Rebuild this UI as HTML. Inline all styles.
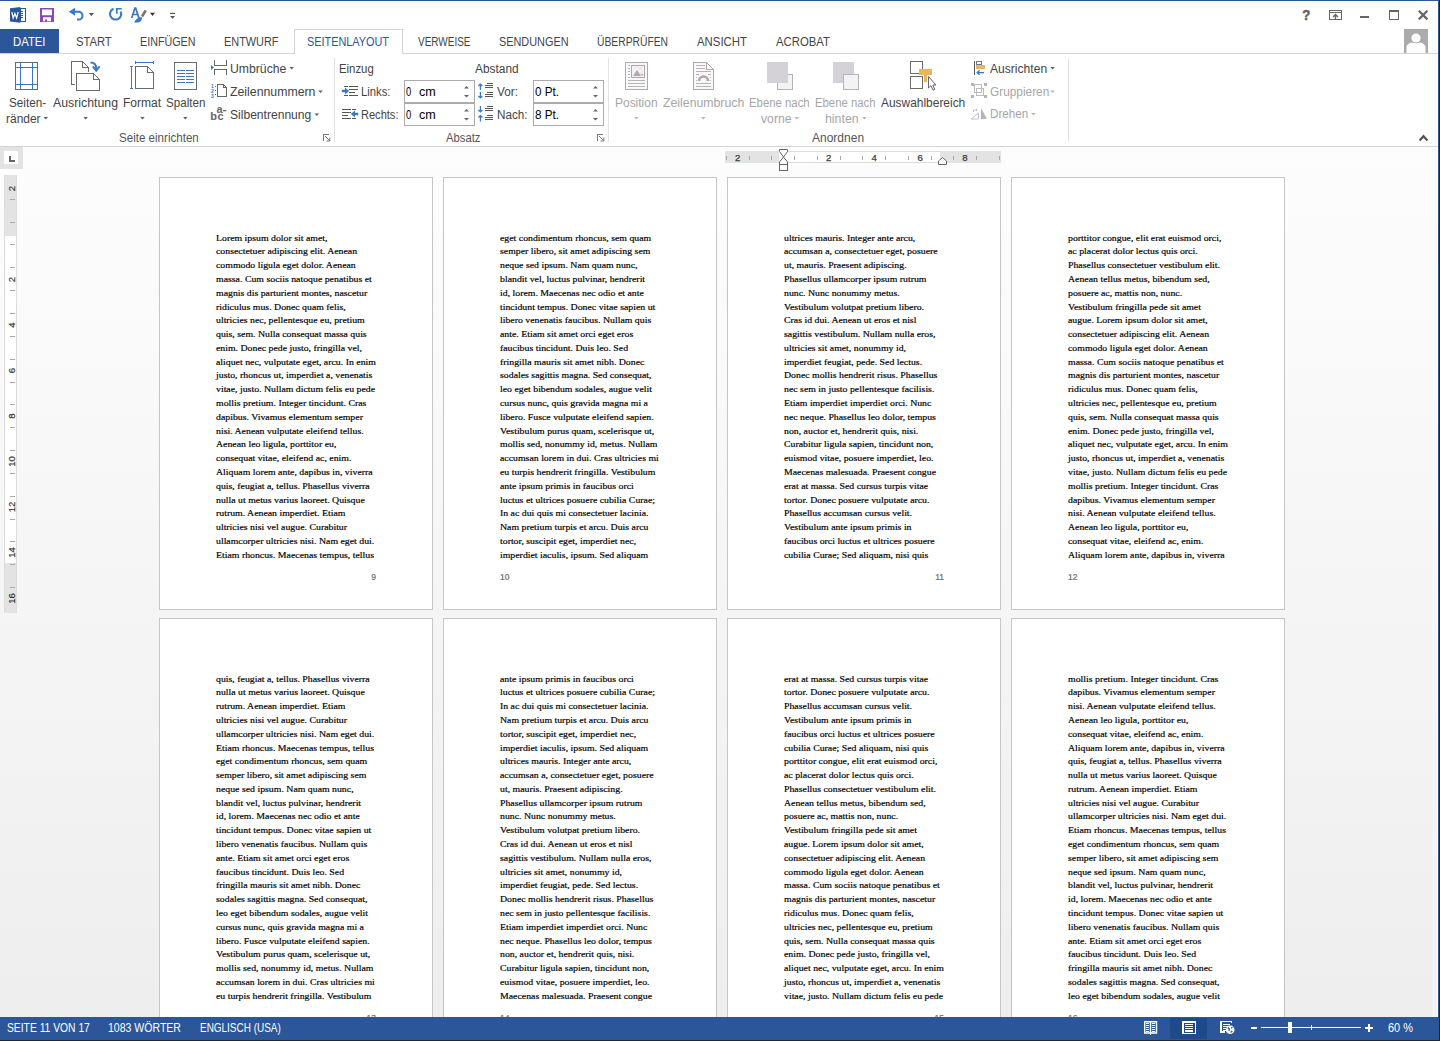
<!DOCTYPE html>
<html><head><meta charset="utf-8"><style>
html,body{margin:0;padding:0}
body{width:1440px;height:1041px;overflow:hidden;position:relative;background:#fff;font-family:"Liberation Sans",sans-serif}
.t{position:absolute;white-space:pre;transform-origin:0 0}
.a{position:absolute}
.pg{position:absolute;width:272px;height:431px;border:1px solid #c6c6c6;background:#fff}
.tx{position:absolute;white-space:pre;font-family:"Liberation Serif",serif;transform-origin:0 0}
.pn{position:absolute;font-size:8.5px;line-height:8.5px;color:#6e6e6e;-webkit-text-stroke:0.2px #6e6e6e;white-space:pre}
</style></head><body>
<!-- window border -->
<div class="a" style="left:0;top:0;width:1440px;height:1px;background:#2b579a"></div>
<div class="a" style="left:1438px;top:0;width:1px;height:1041px;background:#2b579a"></div>
<div class="a" style="left:1439px;top:0;width:1px;height:1041px;background:#202020"></div>
<!-- doc area background -->
<div class="a" style="left:0;top:147px;width:1438px;height:870px;background:linear-gradient(#fdfdfd,#eeeeee)"></div>
<!-- tab row -->
<div class="a" style="left:0;top:29px;width:59px;height:24px;background:#2b579a"></div>
<div class="a" style="left:0;top:53px;width:294px;height:1px;background:#d4d4d4"></div>
<div class="a" style="left:403px;top:53px;width:1035px;height:1px;background:#d4d4d4"></div>
<div class="a" style="left:294px;top:29px;width:107px;height:24px;border:1px solid #d4d4d4;border-bottom:none"></div>
<!-- ribbon bottom -->
<div class="a" style="left:0;top:146px;width:1438px;height:1px;background:#d4d4d4"></div>
<!-- group separators -->
<div class="a" style="left:334px;top:58px;width:1px;height:84px;background:#e1e1e1"></div>
<div class="a" style="left:608px;top:58px;width:1px;height:84px;background:#e1e1e1"></div>
<div class="a" style="left:1068px;top:58px;width:1px;height:84px;background:#e1e1e1"></div>
<!-- status bar -->
<div class="a" style="left:0;top:1017px;width:1438px;height:23px;background:#2b579a"></div>
<div class="a" style="left:0;top:1040px;width:1440px;height:1px;background:#262626"></div>
<div class="a" style="left:1170px;top:1018px;width:37px;height:21px;background:#1f4a8a"></div>
<div class="a" style="left:1432px;top:147px;width:5px;height:870px;background:linear-gradient(#fefefe,#f2f2f4)"></div>
<div class="a" style="left:1437px;top:147px;width:1px;height:870px;background:#fcfcfc"></div>
<svg class="a" style="left:0;top:0" width="1440" height="147" viewBox="0 0 1440 147">
<!-- Word logo -->
<path d="M10 8.2 L20.3 7 L20.3 22.8 L10 21.6 Z" fill="#2b579a"/>
<rect x="20.5" y="8.5" width="5" height="13" fill="#fff" stroke="#2b579a" stroke-width="1"/>
<path d="M20.5 11.5h2.5M20.5 13.5h2.5M20.5 15.5h2.5M20.5 17.5h2.5" stroke="#2b579a" stroke-width="1"/>
<path d="M11.8 12 L13.2 18 L14.9 13.5 L16.6 18 L18.2 12" fill="none" stroke="#fff" stroke-width="1.2"/>
<!-- Save -->
<path d="M40 8 H54 V22 H40 Z M42 9.6 V15.3 H52 V9.6 Z M43 17.2 V21.2 H45.2 V19.2 H47 V21.2 H51 V17.2 Z" fill="#8b48b8" fill-rule="evenodd"/>
<!-- Undo -->
<path d="M68.8 11.8 L75 7.8 L75 15.8 Z" fill="#3a78c4"/>
<path d="M74 11.8 H78.6 A3.9 3.9 0 0 1 78.6 19.6 H77" fill="none" stroke="#3a78c4" stroke-width="2"/>
<path d="M88.8 13 H94 L91.4 16 Z" fill="#555"/>
<!-- Redo -->
<path d="M113.5 8.8 A5.6 5.6 0 1 0 120.6 11.5" fill="none" stroke="#3a78c4" stroke-width="2"/>
<path d="M116 8 H121.8 L121.8 9.6 L117.6 9.6 L117.6 13.8 L116 13.8 Z" fill="#3a78c4"/>
<!-- Format painter -->
<path d="M130.8 18 L134.3 7.2 L136.3 7.2 L139.9 18 L138 18 L137.1 15.3 L133.5 15.3 L132.6 18 Z M134 13.8 L136.6 13.8 L135.3 9.8 Z" fill="#3a78c4" fill-rule="evenodd"/>
<path d="M142 16.5 L145.8 10.4" stroke="#7a7470" stroke-width="2.6"/>
<path d="M134 22.6 C135.3 19.6 138.2 17.3 141.6 17 C142.6 18.8 141.2 21.8 138.5 22.4 Z" fill="#3a78c4"/>
<path d="M150 12.8 H155 L152.5 16 Z" fill="#333"/>
<!-- customize -->
<rect x="170" y="12.8" width="5" height="1.2" fill="#555"/>
<path d="M170 16 H175 L172.5 18.8 Z" fill="#555"/>
<!-- window controls -->
<text x="1302.2" y="20.2" font-family="Liberation Sans" font-weight="700" font-size="14" fill="#666" stroke="#666" stroke-width="0.5" transform="translate(1302.2 20.2) scale(0.95 1) translate(-1302.2 -20.2)">?</text>
<rect x="1329.5" y="10.5" width="12" height="9" fill="none" stroke="#666" stroke-width="1"/>
<path d="M1329.5 12.5 H1341.5" stroke="#666" stroke-width="1"/>
<path d="M1335.5 19.5 V14.8 M1333 17 L1335.5 14.5 L1338 17" fill="none" stroke="#666" stroke-width="1.4"/>
<rect x="1360" y="16" width="9" height="2" fill="#666"/>
<rect x="1389.5" y="10.5" width="9" height="9" fill="none" stroke="#666" stroke-width="1"/>
<rect x="1389" y="10" width="10" height="2" fill="#666"/>
<path d="M1418.8 10.8 L1427.4 19.4 M1427.4 10.8 L1418.8 19.4" stroke="#666" stroke-width="2.2"/>
<!-- avatar -->
<rect x="1404" y="29" width="24" height="24" fill="#ababab"/>
<circle cx="1416" cy="38" r="4.6" fill="#fff"/>
<path d="M1406.5 53 V47.5 C1406.5 44.5 1409.5 43 1412 42.6 C1413.5 43.6 1418.5 43.6 1420 42.6 C1422.5 43 1425.5 44.5 1425.5 47.5 V53 Z" fill="#fff"/>
<!-- Seitenraender -->
<g shape-rendering="crispEdges">
<rect x="15.5" y="62.5" width="22" height="27" fill="#fff" stroke="#6a6a6a"/>
<path d="M20.5 63 V89 M32.5 63 V89 M16 67.5 H37 M16 84.5 H37" stroke="#3a78c4"/>
<!-- Format -->
<path d="M135.5 66.5 H147.5 L153.5 72.5 V88.5 H135.5 Z" fill="#fff" stroke="#6a6a6a"/>
<path d="M147.5 66.5 V72.5 H153.5" fill="none" stroke="#6a6a6a"/>
<path d="M135.5 62.5 H153.5 M135.5 61 V64 M153.5 61 V64" stroke="#3a78c4"/>
<path d="M131.5 66.5 V88.5 M130 66.5 H133 M130 88.5 H133" stroke="#3a78c4"/>
<!-- Spalten -->
<rect x="174.5" y="62.5" width="22" height="27" fill="#fff" stroke="#6a6a6a"/>
<path d="M177 70.5 H185 M186 70.5 H194 M177 73.5 H185 M186 73.5 H194 M177 76.5 H185 M186 76.5 H194 M177 79.5 H185 M186 79.5 H194 M177 82.5 H185 M186 82.5 H194" stroke="#3a78c4"/>
<!-- Ausrichtung -->
<path d="M75 84.5 H71.5 V61.5 H82.5 L88.5 67.5 V71.5" fill="none" stroke="#6a6a6a"/>
<path d="M82.5 61.5 V67.5 H88.5" fill="none" stroke="#6a6a6a"/>
<path d="M76.5 73.5 H93.5 L99.5 79.5 V90.5 H76.5 Z" fill="#fff" stroke="#6a6a6a"/>
<path d="M93.5 73.5 V79.5 H99.5" fill="none" stroke="#6a6a6a"/>
</g>
<path d="M90.5 62.5 C94 62.5 96.5 64.5 96.2 69" fill="none" stroke="#3a78c4" stroke-width="2"/>
<path d="M92.8 66.4 L96.2 70.6 L99.6 66.4" fill="none" stroke="#3a78c4" stroke-width="2"/>
<!-- Umbrueche -->
<g shape-rendering="crispEdges">
<path d="M214.5 60 V65.5 H226.5 V60 M214.5 75 V69.5 H226.5 V75" fill="none" stroke="#666"/>
<!-- Zeilennummern -->
<path d="M217.5 84.5 H223.5 L226.5 87.5 V96.5 H217.5 Z" fill="#fff" stroke="#666"/>
<path d="M223.5 84.5 V87.5 H226.5" fill="none" stroke="#666"/>
<rect x="215" y="86" width="1" height="1" fill="#666"/><rect x="215" y="90" width="1" height="1" fill="#666"/><rect x="215" y="94" width="1" height="1" fill="#666"/>
</g>
<path d="M211 65 L214 67.5 L211 70 Z" fill="#3a78c4"/>
<text x="211" y="88" font-family="Liberation Sans" font-size="5" font-weight="700" fill="#3a78c4">1</text>
<text x="211" y="92.5" font-family="Liberation Sans" font-size="5" font-weight="700" fill="#3a78c4">2</text>
<text x="211" y="97.5" font-family="Liberation Sans" font-size="5" font-weight="700" fill="#3a78c4">3</text>
<!-- Silbentrennung -->
<g font-family="Liberation Sans" font-size="11" font-weight="700" fill="#666">
<text x="210.3" y="120">b</text><text x="217.4" y="120">c</text><text x="216.6" y="113">a</text>
</g>
<rect x="223" y="110" width="3.4" height="1.3" fill="#666"/>
<!-- Links -->
<g shape-rendering="crispEdges" fill="#555">
<rect x="344" y="86" width="4" height="1"/><rect x="349" y="86" width="9" height="1"/>
<rect x="349" y="89" width="9" height="1"/><rect x="349" y="92" width="6" height="1"/>
<rect x="344" y="95" width="4" height="1"/><rect x="349" y="95" width="9" height="1"/>
<rect x="342" y="109" width="9" height="1"/><rect x="352" y="109" width="4" height="1"/>
<rect x="342" y="112" width="9" height="1"/><rect x="342" y="115" width="6" height="1"/>
<rect x="342" y="118" width="9" height="1"/><rect x="352" y="118" width="4" height="1"/>
</g>
<path d="M341.8 89.8 H345 V87.6 L349.2 91 L345 94.4 V92.2 H341.8 Z" fill="#3a78c4"/>
<path d="M358.2 112.8 H355 V110.6 L350.8 114 L355 117.4 V115.2 H358.2 Z" fill="#3a78c4"/>
<!-- Vor / Nach -->
<g shape-rendering="crispEdges" fill="#555">
<rect x="487" y="83" width="6" height="1"/><rect x="485" y="85" width="8" height="1"/><rect x="485" y="87" width="8" height="1"/>
<rect x="487" y="92" width="6" height="1"/><rect x="485" y="94" width="8" height="1"/><rect x="485" y="96" width="8" height="1"/>
<rect x="487" y="106" width="6" height="1"/><rect x="485" y="108" width="8" height="1"/><rect x="485" y="110" width="8" height="1"/>
<rect x="487" y="115" width="6" height="1"/><rect x="485" y="117" width="8" height="1"/><rect x="485" y="119" width="8" height="1"/>
</g>
<g fill="none" stroke="#3a78c4" stroke-width="1.2">
<path d="M480.4 84 V90 M478.4 86 L480.4 84 L482.4 86"/>
<path d="M480.4 92 V98 M478.4 96 L480.4 98 L482.4 96"/>
<path d="M480.4 106 V112 M478.4 110 L480.4 112 L482.4 110"/>
<path d="M480.4 115.5 V121.5 M478.4 117.5 L480.4 115.5 L482.4 117.5"/>
</g>
<!-- input boxes -->
<g shape-rendering="crispEdges" fill="#fff" stroke="#ababab">
<rect x="404.5" y="80.5" width="70" height="22"/>
<rect x="404.5" y="103.5" width="70" height="22"/>
<rect x="533.5" y="80.5" width="70" height="22"/>
<rect x="533.5" y="103.5" width="70" height="22"/>
</g>
<g fill="#666">
<path d="M464 88.5 H469 L466.5 86 Z"/><path d="M464 95 H469 L466.5 97.5 Z"/>
<path d="M464 111.5 H469 L466.5 109 Z"/><path d="M464 118 H469 L466.5 120.5 Z"/>
<path d="M593 88.5 H598 L595.5 86 Z"/><path d="M593 95 H598 L595.5 97.5 Z"/>
<path d="M593 111.5 H598 L595.5 109 Z"/><path d="M593 118 H598 L595.5 120.5 Z"/>
</g>
<!-- dialog launchers -->
<g fill="none" stroke="#777" stroke-width="1" shape-rendering="crispEdges">
<path d="M323.5 141 V134.5 H329"/><path d="M597.5 141 V134.5 H603"/>
</g>
<path d="M325 136 L329.5 140.5 M329.8 137.5 V141 H326.5" fill="none" stroke="#777" stroke-width="1"/>
<path d="M599 136 L603.5 140.5 M603.8 137.5 V141 H600.5" fill="none" stroke="#777" stroke-width="1"/>
<!-- Position -->
<g shape-rendering="crispEdges">
<rect x="625.5" y="62.5" width="22" height="27" fill="#fbf7fb" stroke="#aaa"/>
<rect x="631.5" y="65.5" width="13" height="12" fill="#f6f0f6" stroke="#aaa"/>
<path d="M628 65.5 H630 M628 68.5 H630 M628 71.5 H630 M628 74.5 H630 M628 77.5 H630 M628 80.5 H645 M628 83.5 H645 M628 86.5 H645" stroke="#b4b4b4"/>
</g>
<path d="M633 76 L637 70 L641 76 Z M640 73.5 L642.5 76 L643.5 74.5 Z" fill="#aaa"/>
<circle cx="640.5" cy="68.5" r="1" fill="#ddd"/>
<!-- Zeilenumbruch -->
<g shape-rendering="crispEdges">
<path d="M693.5 62.5 H706.5 L713.5 69.5 V89.5 H693.5 Z" fill="#fbf7fb" stroke="#aaa"/>
<path d="M706.5 62.5 V69.5 H713.5" fill="none" stroke="#aaa"/>
<path d="M696 65.5 H705 M696 68.5 H705 M696 71.5 H711 M696 74.5 H699 M708 74.5 H711 M696 83.5 H711 M696 86.5 H711" stroke="#b4b4b4"/>
<path d="M696 77.5 H697 M696 80.5 H697 M710 77.5 H711 M710 80.5 H711" stroke="#bbb"/>
</g>
<path d="M699 81 A4.5 4.5 0 0 1 708 81" fill="none" stroke="#aaa" stroke-width="2.6"/>
<!-- Ebene nach vorne -->
<g shape-rendering="crispEdges">
<rect x="777.5" y="74.5" width="15" height="15" fill="#f6f1f6" stroke="#b4b4b4"/>
<rect x="767" y="62" width="21" height="21" fill="#d4d2d7"/>
<!-- Ebene nach hinten -->
<rect x="833" y="62" width="21" height="21" fill="#d4d2d7"/>
<rect x="843.5" y="74.5" width="15" height="15" fill="#f6f1f6" stroke="#b4b4b4"/>
<!-- Auswahlbereich -->
<path d="M919 73.5 H910.5 V61.5 H922.5 V69" fill="none" stroke="#6a6a6a"/>
<rect x="910.5" y="76.5" width="12" height="12" fill="none" stroke="#6a6a6a"/>
<rect x="919" y="69" width="13" height="6" fill="#eab55c"/>
<rect x="924" y="75" width="3" height="7" fill="#eab55c"/>
</g>
<path d="M928.5 76.5 V88 L931 85.7 L933 90.2 L934.8 89.4 L932.8 85 L936 85 Z" fill="#fff" stroke="#666" stroke-width="1"/>
<!-- Ausrichten -->
<g shape-rendering="crispEdges">
<path d="M974.5 61 V75" stroke="#555"/>
<rect x="976.5" y="61.5" width="5" height="2.5" fill="none" stroke="#777"/>
<rect x="976" y="65" width="9" height="4" fill="#eab55c"/>
</g>
<path d="M984 72.6 H977.5 M979.6 70.4 L977.2 72.6 L979.6 74.8" fill="none" stroke="#3a78c4" stroke-width="1.3"/>
<!-- Gruppieren -->
<g shape-rendering="crispEdges">
<rect x="971" y="83" width="3" height="3" fill="#b4b4b4"/><rect x="984" y="83" width="3" height="3" fill="#b4b4b4"/>
<rect x="971" y="95" width="3" height="3" fill="#b4b4b4"/><rect x="984" y="95" width="3" height="3" fill="#b4b4b4"/>
<path d="M974.5 84.5 H981.5 V92.5 H974.5 Z" fill="none" stroke="#bcbcbc"/>
<path d="M976.5 88.5 H983.5 V95.5 H976.5 Z" fill="none" stroke="#bcbcbc"/>
</g>
<!-- Drehen -->
<path d="M971 119 L978.5 113 L978.5 119 Z" fill="none" stroke="#c4c4c4" stroke-width="1"/>
<path d="M981 108 L987 119 L981 119 Z" fill="#b4b4b4"/>
<path d="M973.5 112 V110 H977 M976 109 L977.2 110 L976 111" fill="none" stroke="#b4b4b4" stroke-width="0.8"/>
<!-- dropdown arrows -->
<g fill="#606060">
<path d="M43.5 117 H48 L45.75 119.5 Z"/>
<path d="M83.4 117 H87.9 L85.65 119.5 Z"/>
<path d="M140.2 117 H144.7 L142.45 119.5 Z"/>
<path d="M183.1 117 H187.6 L185.35 119.5 Z"/>
<path d="M289.4 67 H293.9 L291.65 69.5 Z"/>
<path d="M318.2 90.5 H322.7 L320.45 93 Z"/>
<path d="M314.6 113.5 H319.1 L316.85 116 Z"/>
<path d="M1050.3 67 H1054.8 L1052.55 69.5 Z"/>
</g>
<g fill="#b4b4b4">
<path d="M634.2 117 H638.7 L636.45 119.5 Z"/>
<path d="M701.1 117 H705.6 L703.35 119.5 Z"/>
<path d="M794.5 117 H799 L796.75 119.5 Z"/>
<path d="M862.2 117 H866.7 L864.45 119.5 Z"/>
<path d="M1050.3 90.5 H1054.8 L1052.55 93 Z"/>
<path d="M1031.1 113 H1035.6 L1033.35 115.5 Z"/>
</g>
<!-- collapse chevron -->
<path d="M1419.6 140.6 L1423.5 136.2 L1427.4 140.6" fill="none" stroke="#555" stroke-width="2.2"/>
</svg>

<div class="a" style="left:0;top:0;width:1440px;height:1017px;overflow:hidden"><div class="pg" style="left:159px;top:177px"></div>
<div class="tx" style="left:216px;top:231.67px;font-size:9.0px;line-height:13.78px;transform:scaleX(1.09);color:#000;font-weight:400;-webkit-text-stroke:0.18px #000;">Lorem ipsum dolor sit amet,
consectetuer adipiscing elit. Aenean
commodo ligula eget dolor. Aenean
massa. Cum sociis natoque penatibus et
magnis dis parturient montes, nascetur
ridiculus mus. Donec quam felis,
ultricies nec, pellentesque eu, pretium
quis, sem. Nulla consequat massa quis
enim. Donec pede justo, fringilla vel,
aliquet nec, vulputate eget, arcu. In enim
justo, rhoncus ut, imperdiet a, venenatis
vitae, justo. Nullam dictum felis eu pede
mollis pretium. Integer tincidunt. Cras
dapibus. Vivamus elementum semper
nisi. Aenean vulputate eleifend tellus.
Aenean leo ligula, porttitor eu,
consequat vitae, eleifend ac, enim.
Aliquam lorem ante, dapibus in, viverra
quis, feugiat a, tellus. Phasellus viverra
nulla ut metus varius laoreet. Quisque
rutrum. Aenean imperdiet. Etiam
ultricies nisi vel augue. Curabitur
ullamcorper ultricies nisi. Nam eget dui.
Etiam rhoncus. Maecenas tempus, tellus</div>
<div class="pn" style="left:216px;top:572.5px;width:160px;text-align:right">9</div>
<div class="pg" style="left:443px;top:177px"></div>
<div class="tx" style="left:500px;top:231.67px;font-size:9.0px;line-height:13.78px;transform:scaleX(1.09);color:#000;font-weight:400;-webkit-text-stroke:0.18px #000;">eget condimentum rhoncus, sem quam
semper libero, sit amet adipiscing sem
neque sed ipsum. Nam quam nunc,
blandit vel, luctus pulvinar, hendrerit
id, lorem. Maecenas nec odio et ante
tincidunt tempus. Donec vitae sapien ut
libero venenatis faucibus. Nullam quis
ante. Etiam sit amet orci eget eros
faucibus tincidunt. Duis leo. Sed
fringilla mauris sit amet nibh. Donec
sodales sagittis magna. Sed consequat,
leo eget bibendum sodales, augue velit
cursus nunc, quis gravida magna mi a
libero. Fusce vulputate eleifend sapien.
Vestibulum purus quam, scelerisque ut,
mollis sed, nonummy id, metus. Nullam
accumsan lorem in dui. Cras ultricies mi
eu turpis hendrerit fringilla. Vestibulum
ante ipsum primis in faucibus orci
luctus et ultrices posuere cubilia Curae;
In ac dui quis mi consectetuer lacinia.
Nam pretium turpis et arcu. Duis arcu
tortor, suscipit eget, imperdiet nec,
imperdiet iaculis, ipsum. Sed aliquam</div>
<div class="pn" style="left:500px;top:572.5px">10</div>
<div class="pg" style="left:727px;top:177px"></div>
<div class="tx" style="left:784px;top:231.67px;font-size:9.0px;line-height:13.78px;transform:scaleX(1.09);color:#000;font-weight:400;-webkit-text-stroke:0.18px #000;">ultrices mauris. Integer ante arcu,
accumsan a, consectetuer eget, posuere
ut, mauris. Praesent adipiscing.
Phasellus ullamcorper ipsum rutrum
nunc. Nunc nonummy metus.
Vestibulum volutpat pretium libero.
Cras id dui. Aenean ut eros et nisl
sagittis vestibulum. Nullam nulla eros,
ultricies sit amet, nonummy id,
imperdiet feugiat, pede. Sed lectus.
Donec mollis hendrerit risus. Phasellus
nec sem in justo pellentesque facilisis.
Etiam imperdiet imperdiet orci. Nunc
nec neque. Phasellus leo dolor, tempus
non, auctor et, hendrerit quis, nisi.
Curabitur ligula sapien, tincidunt non,
euismod vitae, posuere imperdiet, leo.
Maecenas malesuada. Praesent congue
erat at massa. Sed cursus turpis vitae
tortor. Donec posuere vulputate arcu.
Phasellus accumsan cursus velit.
Vestibulum ante ipsum primis in
faucibus orci luctus et ultrices posuere
cubilia Curae; Sed aliquam, nisi quis</div>
<div class="pn" style="left:784px;top:572.5px;width:160px;text-align:right">11</div>
<div class="pg" style="left:1011px;top:177px"></div>
<div class="tx" style="left:1068px;top:231.67px;font-size:9.0px;line-height:13.78px;transform:scaleX(1.09);color:#000;font-weight:400;-webkit-text-stroke:0.18px #000;">porttitor congue, elit erat euismod orci,
ac placerat dolor lectus quis orci.
Phasellus consectetuer vestibulum elit.
Aenean tellus metus, bibendum sed,
posuere ac, mattis non, nunc.
Vestibulum fringilla pede sit amet
augue. Lorem ipsum dolor sit amet,
consectetuer adipiscing elit. Aenean
commodo ligula eget dolor. Aenean
massa. Cum sociis natoque penatibus et
magnis dis parturient montes, nascetur
ridiculus mus. Donec quam felis,
ultricies nec, pellentesque eu, pretium
quis, sem. Nulla consequat massa quis
enim. Donec pede justo, fringilla vel,
aliquet nec, vulputate eget, arcu. In enim
justo, rhoncus ut, imperdiet a, venenatis
vitae, justo. Nullam dictum felis eu pede
mollis pretium. Integer tincidunt. Cras
dapibus. Vivamus elementum semper
nisi. Aenean vulputate eleifend tellus.
Aenean leo ligula, porttitor eu,
consequat vitae, eleifend ac, enim.
Aliquam lorem ante, dapibus in, viverra</div>
<div class="pn" style="left:1068px;top:572.5px">12</div>
<div class="pg" style="left:159px;top:618px"></div>
<div class="tx" style="left:216px;top:672.67px;font-size:9.0px;line-height:13.78px;transform:scaleX(1.09);color:#000;font-weight:400;-webkit-text-stroke:0.18px #000;">quis, feugiat a, tellus. Phasellus viverra
nulla ut metus varius laoreet. Quisque
rutrum. Aenean imperdiet. Etiam
ultricies nisi vel augue. Curabitur
ullamcorper ultricies nisi. Nam eget dui.
Etiam rhoncus. Maecenas tempus, tellus
eget condimentum rhoncus, sem quam
semper libero, sit amet adipiscing sem
neque sed ipsum. Nam quam nunc,
blandit vel, luctus pulvinar, hendrerit
id, lorem. Maecenas nec odio et ante
tincidunt tempus. Donec vitae sapien ut
libero venenatis faucibus. Nullam quis
ante. Etiam sit amet orci eget eros
faucibus tincidunt. Duis leo. Sed
fringilla mauris sit amet nibh. Donec
sodales sagittis magna. Sed consequat,
leo eget bibendum sodales, augue velit
cursus nunc, quis gravida magna mi a
libero. Fusce vulputate eleifend sapien.
Vestibulum purus quam, scelerisque ut,
mollis sed, nonummy id, metus. Nullam
accumsan lorem in dui. Cras ultricies mi
eu turpis hendrerit fringilla. Vestibulum</div>
<div class="pn" style="left:216px;top:1013.5px;width:160px;text-align:right">13</div>
<div class="pg" style="left:443px;top:618px"></div>
<div class="tx" style="left:500px;top:672.67px;font-size:9.0px;line-height:13.78px;transform:scaleX(1.09);color:#000;font-weight:400;-webkit-text-stroke:0.18px #000;">ante ipsum primis in faucibus orci
luctus et ultrices posuere cubilia Curae;
In ac dui quis mi consectetuer lacinia.
Nam pretium turpis et arcu. Duis arcu
tortor, suscipit eget, imperdiet nec,
imperdiet iaculis, ipsum. Sed aliquam
ultrices mauris. Integer ante arcu,
accumsan a, consectetuer eget, posuere
ut, mauris. Praesent adipiscing.
Phasellus ullamcorper ipsum rutrum
nunc. Nunc nonummy metus.
Vestibulum volutpat pretium libero.
Cras id dui. Aenean ut eros et nisl
sagittis vestibulum. Nullam nulla eros,
ultricies sit amet, nonummy id,
imperdiet feugiat, pede. Sed lectus.
Donec mollis hendrerit risus. Phasellus
nec sem in justo pellentesque facilisis.
Etiam imperdiet imperdiet orci. Nunc
nec neque. Phasellus leo dolor, tempus
non, auctor et, hendrerit quis, nisi.
Curabitur ligula sapien, tincidunt non,
euismod vitae, posuere imperdiet, leo.
Maecenas malesuada. Praesent congue</div>
<div class="pn" style="left:500px;top:1013.5px">14</div>
<div class="pg" style="left:727px;top:618px"></div>
<div class="tx" style="left:784px;top:672.67px;font-size:9.0px;line-height:13.78px;transform:scaleX(1.09);color:#000;font-weight:400;-webkit-text-stroke:0.18px #000;">erat at massa. Sed cursus turpis vitae
tortor. Donec posuere vulputate arcu.
Phasellus accumsan cursus velit.
Vestibulum ante ipsum primis in
faucibus orci luctus et ultrices posuere
cubilia Curae; Sed aliquam, nisi quis
porttitor congue, elit erat euismod orci,
ac placerat dolor lectus quis orci.
Phasellus consectetuer vestibulum elit.
Aenean tellus metus, bibendum sed,
posuere ac, mattis non, nunc.
Vestibulum fringilla pede sit amet
augue. Lorem ipsum dolor sit amet,
consectetuer adipiscing elit. Aenean
commodo ligula eget dolor. Aenean
massa. Cum sociis natoque penatibus et
magnis dis parturient montes, nascetur
ridiculus mus. Donec quam felis,
ultricies nec, pellentesque eu, pretium
quis, sem. Nulla consequat massa quis
enim. Donec pede justo, fringilla vel,
aliquet nec, vulputate eget, arcu. In enim
justo, rhoncus ut, imperdiet a, venenatis
vitae, justo. Nullam dictum felis eu pede</div>
<div class="pn" style="left:784px;top:1013.5px;width:160px;text-align:right">15</div>
<div class="pg" style="left:1011px;top:618px"></div>
<div class="tx" style="left:1068px;top:672.67px;font-size:9.0px;line-height:13.78px;transform:scaleX(1.09);color:#000;font-weight:400;-webkit-text-stroke:0.18px #000;">mollis pretium. Integer tincidunt. Cras
dapibus. Vivamus elementum semper
nisi. Aenean vulputate eleifend tellus.
Aenean leo ligula, porttitor eu,
consequat vitae, eleifend ac, enim.
Aliquam lorem ante, dapibus in, viverra
quis, feugiat a, tellus. Phasellus viverra
nulla ut metus varius laoreet. Quisque
rutrum. Aenean imperdiet. Etiam
ultricies nisi vel augue. Curabitur
ullamcorper ultricies nisi. Nam eget dui.
Etiam rhoncus. Maecenas tempus, tellus
eget condimentum rhoncus, sem quam
semper libero, sit amet adipiscing sem
neque sed ipsum. Nam quam nunc,
blandit vel, luctus pulvinar, hendrerit
id, lorem. Maecenas nec odio et ante
tincidunt tempus. Donec vitae sapien ut
libero venenatis faucibus. Nullam quis
ante. Etiam sit amet orci eget eros
faucibus tincidunt. Duis leo. Sed
fringilla mauris sit amet nibh. Donec
sodales sagittis magna. Sed consequat,
leo eget bibendum sodales, augue velit</div>
<div class="pn" style="left:1068px;top:1013.5px">16</div></div>
<svg class="a" style="left:0;top:0" width="1440" height="1041" viewBox="0 0 1440 1041">
<g shape-rendering="crispEdges"><rect x="0" y="147" width="23" height="22" fill="#e3e3e3"/><rect x="4" y="151" width="14" height="13" fill="#fff"/>
<path d="M9 156 H11 V160 H15 V162 H9 Z" fill="#666"/>
<rect x="725" y="151" width="276" height="12" fill="#e3e3e3"/>
<rect x="779" y="152" width="161" height="10" fill="#fff"/>
<rect x="779" y="151" width="161" height="1" fill="#dcdcdc"/><rect x="779" y="162" width="161" height="1" fill="#dcdcdc"/>
<rect x="726" y="156" width="1" height="4" fill="#a8a8a8"/>
<rect x="749" y="156" width="1" height="4" fill="#a8a8a8"/>
<rect x="771" y="156" width="1" height="4" fill="#a8a8a8"/>
<rect x="794" y="156" width="1" height="4" fill="#a8a8a8"/>
<rect x="817" y="156" width="1" height="4" fill="#a8a8a8"/>
<rect x="840" y="156" width="1" height="4" fill="#a8a8a8"/>
<rect x="862" y="156" width="1" height="4" fill="#a8a8a8"/>
<rect x="885" y="156" width="1" height="4" fill="#a8a8a8"/>
<rect x="908" y="156" width="1" height="4" fill="#a8a8a8"/>
<rect x="931" y="156" width="1" height="4" fill="#a8a8a8"/>
<rect x="953" y="156" width="1" height="4" fill="#a8a8a8"/>
<rect x="976" y="156" width="1" height="4" fill="#a8a8a8"/>
<rect x="999" y="156" width="1" height="4" fill="#a8a8a8"/>
<rect x="4" y="175" width="13" height="438" fill="#dcdcdc"/>
<rect x="5" y="175" width="11" height="438" fill="#e3e3e3"/>
<rect x="5" y="236" width="11" height="327" fill="#fff"/>
<rect x="10" y="199" width="5" height="1" fill="#a8a8a8"/>
<rect x="10" y="222" width="5" height="1" fill="#a8a8a8"/>
<rect x="10" y="244" width="5" height="1" fill="#a8a8a8"/>
<rect x="10" y="267" width="5" height="1" fill="#a8a8a8"/>
<rect x="10" y="290" width="5" height="1" fill="#a8a8a8"/>
<rect x="10" y="313" width="5" height="1" fill="#a8a8a8"/>
<rect x="10" y="336" width="5" height="1" fill="#a8a8a8"/>
<rect x="10" y="359" width="5" height="1" fill="#a8a8a8"/>
<rect x="10" y="382" width="5" height="1" fill="#a8a8a8"/>
<rect x="10" y="404" width="5" height="1" fill="#a8a8a8"/>
<rect x="10" y="427" width="5" height="1" fill="#a8a8a8"/>
<rect x="10" y="450" width="5" height="1" fill="#a8a8a8"/>
<rect x="10" y="473" width="5" height="1" fill="#a8a8a8"/>
<rect x="10" y="496" width="5" height="1" fill="#a8a8a8"/>
<rect x="10" y="519" width="5" height="1" fill="#a8a8a8"/>
<rect x="10" y="541" width="5" height="1" fill="#a8a8a8"/>
<rect x="10" y="564" width="5" height="1" fill="#a8a8a8"/>
<rect x="10" y="587" width="5" height="1" fill="#a8a8a8"/>
</g>
<text transform="translate(15.2 188.7) rotate(-90)" text-anchor="middle" font-family="Liberation Sans" font-size="9.6" fill="#333" stroke="#333" stroke-width="0.2">2</text>
<text transform="translate(15.2 279.5) rotate(-90)" text-anchor="middle" font-family="Liberation Sans" font-size="9.6" fill="#333" stroke="#333" stroke-width="0.2">2</text>
<text transform="translate(15.2 325) rotate(-90)" text-anchor="middle" font-family="Liberation Sans" font-size="9.6" fill="#333" stroke="#333" stroke-width="0.2">4</text>
<text transform="translate(15.2 370.5) rotate(-90)" text-anchor="middle" font-family="Liberation Sans" font-size="9.6" fill="#333" stroke="#333" stroke-width="0.2">6</text>
<text transform="translate(15.2 416) rotate(-90)" text-anchor="middle" font-family="Liberation Sans" font-size="9.6" fill="#333" stroke="#333" stroke-width="0.2">8</text>
<text transform="translate(15.2 461.5) rotate(-90)" text-anchor="middle" font-family="Liberation Sans" font-size="9.6" fill="#333" stroke="#333" stroke-width="0.2">10</text>
<text transform="translate(15.2 507) rotate(-90)" text-anchor="middle" font-family="Liberation Sans" font-size="9.6" fill="#333" stroke="#333" stroke-width="0.2">12</text>
<text transform="translate(15.2 552.5) rotate(-90)" text-anchor="middle" font-family="Liberation Sans" font-size="9.6" fill="#333" stroke="#333" stroke-width="0.2">14</text>
<text transform="translate(15.2 598.5) rotate(-90)" text-anchor="middle" font-family="Liberation Sans" font-size="9.6" fill="#333" stroke="#333" stroke-width="0.2">16</text>
<path d="M779.5 149.5 H787.5 V151.5 L783.5 157 L787.5 162 V164.5 H779.5 V162 L783.5 157 L779.5 151.5 Z" fill="#fff" stroke="#666" stroke-width="1"/>
<rect x="779.5" y="164.5" width="8" height="6" fill="#fff" stroke="#666" stroke-width="1"/>
<path d="M938.5 164.5 V161 L942.5 157.5 L946.5 161 V164.5 Z" fill="#fff" stroke="#666" stroke-width="1"/>
<g fill="none" stroke="#fff" stroke-width="1.4">
<path d="M1144.7 1021.8 H1150.5 V1033 H1144.7 Z M1150.5 1021.8 H1156.5 V1033 H1150.5 Z"/>
</g>
<g fill="#fff" shape-rendering="crispEdges">
<rect x="1146" y="1023" width="3" height="1"/><rect x="1152" y="1023" width="3" height="1"/>
<rect x="1146" y="1025" width="3" height="1"/><rect x="1152" y="1025" width="3" height="1"/>
<rect x="1146" y="1027" width="3" height="1"/><rect x="1152" y="1027" width="3" height="1"/>
<rect x="1146" y="1029" width="3" height="1"/><rect x="1152" y="1029" width="3" height="1"/>
<rect x="1146" y="1031" width="3" height="1"/><rect x="1152" y="1031" width="3" height="1"/>
<rect x="1150" y="1033" width="1" height="2"/>
<path d="M1182 1021 H1196 V1034 H1182 Z M1183.5 1022.5 V1032.5 H1194.5 V1022.5 Z" fill-rule="evenodd"/>
<rect x="1185" y="1024" width="8" height="1"/>
<rect x="1185" y="1026" width="8" height="1"/>
<rect x="1185" y="1028" width="8" height="1"/>
<rect x="1185" y="1030" width="8" height="1"/>
<rect x="1185" y="1031" width="8" height="1"/>
<path d="M1220 1021 H1232 V1023 H1230.5 V1022.3 H1221.5 V1031.2 H1225 V1032.6 H1220 Z"/>
<rect x="1222.5" y="1024" width="7" height="1"/>
<rect x="1222.5" y="1026" width="7" height="1"/>
<rect x="1222.5" y="1028" width="3" height="1"/>
<rect x="1222.5" y="1030" width="3" height="1"/>
</g>
<circle cx="1230.2" cy="1029.8" r="4.3" fill="#fff"/>
<path d="M1227.8 1027.5 L1229.5 1029.2 L1228.8 1031 M1231 1028 L1232.5 1027.3 M1230.5 1032.5 L1232.2 1031" stroke="#2b579a" stroke-width="1.3" fill="none"/>
<g fill="#fff" shape-rendering="crispEdges">
<rect x="1251" y="1027" width="6" height="2"/>
<rect x="1261" y="1027" width="100" height="1"/>
<rect x="1288" y="1022" width="4" height="11"/>
<rect x="1311" y="1025" width="1" height="5"/>
<rect x="1365" y="1027" width="8" height="2"/><rect x="1368" y="1024" width="2" height="8"/>
</g>
</svg>
<span class="t" style="left:13.00px;top:35.98px;font-size:12.5px;line-height:12.5px;color:#fff;transform:scaleX(0.9055);">DATEI</span><span class="t" style="left:75.60px;top:35.98px;font-size:12.5px;line-height:12.5px;color:#444;transform:scaleX(0.8964);">START</span><span class="t" style="left:139.50px;top:35.98px;font-size:12.5px;line-height:12.5px;color:#444;transform:scaleX(0.8592);">EINFÜGEN</span><span class="t" style="left:224.00px;top:35.98px;font-size:12.5px;line-height:12.5px;color:#444;transform:scaleX(0.8720);">ENTWURF</span><span class="t" style="left:417.50px;top:35.98px;font-size:12.5px;line-height:12.5px;color:#444;transform:scaleX(0.7983);">VERWEISE</span><span class="t" style="left:498.50px;top:35.98px;font-size:12.5px;line-height:12.5px;color:#444;transform:scaleX(0.8701);">SENDUNGEN</span><span class="t" style="left:597.00px;top:35.98px;font-size:12.5px;line-height:12.5px;color:#444;transform:scaleX(0.8244);">ÜBERPRÜFEN</span><span class="t" style="left:696.50px;top:35.98px;font-size:12.5px;line-height:12.5px;color:#444;transform:scaleX(0.9112);">ANSICHT</span><span class="t" style="left:775.50px;top:35.98px;font-size:12.5px;line-height:12.5px;color:#444;transform:scaleX(0.9076);">ACROBAT</span><span class="t" style="left:306.50px;top:35.98px;font-size:12.5px;line-height:12.5px;color:#2b579a;transform:scaleX(0.8702);">SEITENLAYOUT</span><span class="t" style="left:8.72px;top:96.80px;font-size:12px;line-height:12px;color:#444;transform:scaleX(0.9771);">Seiten-</span><span class="t" style="left:5.92px;top:112.80px;font-size:12px;line-height:12px;color:#444;transform:scaleX(0.9963);">ränder</span><span class="t" style="left:53.02px;top:96.80px;font-size:12px;line-height:12px;color:#444;transform:scaleX(1.0266);">Ausrichtung</span><span class="t" style="left:123.02px;top:96.80px;font-size:12px;line-height:12px;color:#444;transform:scaleX(1.0038);">Format</span><span class="t" style="left:165.52px;top:96.80px;font-size:12px;line-height:12px;color:#444;transform:scaleX(0.9670);">Spalten</span><span class="t" style="left:119.02px;top:131.60px;font-size:12px;line-height:12px;color:#555;transform:scaleX(0.9642);">Seite einrichten</span><span class="t" style="left:230.12px;top:62.50px;font-size:12px;line-height:12px;color:#444;transform:scaleX(1.0181);">Umbrüche</span><span class="t" style="left:229.52px;top:85.60px;font-size:12px;line-height:12px;color:#444;transform:scaleX(1.0250);">Zeilennummern</span><span class="t" style="left:229.52px;top:108.50px;font-size:12px;line-height:12px;color:#444;transform:scaleX(1.0065);">Silbentrennung</span><span class="t" style="left:339.12px;top:62.80px;font-size:12px;line-height:12px;color:#444;transform:scaleX(0.9471);">Einzug</span><span class="t" style="left:361.22px;top:85.60px;font-size:12px;line-height:12px;color:#444;transform:scaleX(0.9394);">Links:</span><span class="t" style="left:361.22px;top:108.50px;font-size:12px;line-height:12px;color:#444;transform:scaleX(0.9207);">Rechts:</span><span class="t" style="left:406.22px;top:85.60px;font-size:12px;line-height:12px;color:#000;transform:scaleX(0.7865);">0</span><span class="t" style="left:419.22px;top:85.60px;font-size:12px;line-height:12px;color:#000;transform:scaleX(1.0475);">cm</span><span class="t" style="left:406.22px;top:108.50px;font-size:12px;line-height:12px;color:#000;transform:scaleX(0.7865);">0</span><span class="t" style="left:419.22px;top:108.50px;font-size:12px;line-height:12px;color:#000;transform:scaleX(1.0475);">cm</span><span class="t" style="left:475.12px;top:62.60px;font-size:12px;line-height:12px;color:#444;transform:scaleX(0.9912);">Abstand</span><span class="t" style="left:496.72px;top:85.60px;font-size:12px;line-height:12px;color:#444;transform:scaleX(0.9813);">Vor:</span><span class="t" style="left:497.12px;top:108.50px;font-size:12px;line-height:12px;color:#444;transform:scaleX(0.9745);">Nach:</span><span class="t" style="left:535.12px;top:85.60px;font-size:12px;line-height:12px;color:#000;transform:scaleX(0.9705);">0 Pt.</span><span class="t" style="left:535.12px;top:108.50px;font-size:12px;line-height:12px;color:#000;transform:scaleX(0.9705);">8 Pt.</span><span class="t" style="left:445.82px;top:131.60px;font-size:12px;line-height:12px;color:#555;transform:scaleX(0.9393);">Absatz</span><span class="t" style="left:615.12px;top:96.50px;font-size:12px;line-height:12px;color:#a6a6a6;transform:scaleX(0.9966);">Position</span><span class="t" style="left:662.52px;top:96.50px;font-size:12px;line-height:12px;color:#a6a6a6;transform:scaleX(1.0237);">Zeilenumbruch</span><span class="t" style="left:749.22px;top:96.50px;font-size:12px;line-height:12px;color:#a6a6a6;transform:scaleX(0.9469);">Ebene nach</span><span class="t" style="left:760.92px;top:112.60px;font-size:12px;line-height:12px;color:#a6a6a6;transform:scaleX(1.0176);">vorne</span><span class="t" style="left:815.12px;top:96.50px;font-size:12px;line-height:12px;color:#a6a6a6;transform:scaleX(0.9453);">Ebene nach</span><span class="t" style="left:825.12px;top:112.60px;font-size:12px;line-height:12px;color:#a6a6a6;transform:scaleX(1.0293);">hinten</span><span class="t" style="left:811.72px;top:131.50px;font-size:12px;line-height:12px;color:#555;transform:scaleX(1.0003);">Anordnen</span><span class="t" style="left:880.77px;top:96.50px;font-size:12px;line-height:12px;color:#444;transform:scaleX(0.9946);">Auswahlbereich</span><span class="t" style="left:989.82px;top:62.80px;font-size:12px;line-height:12px;color:#444;transform:scaleX(1.0081);">Ausrichten</span><span class="t" style="left:989.82px;top:85.80px;font-size:12px;line-height:12px;color:#a6a6a6;transform:scaleX(0.9869);">Gruppieren</span><span class="t" style="left:989.82px;top:108.40px;font-size:12px;line-height:12px;color:#a6a6a6;transform:scaleX(0.9695);">Drehen</span><span class="t" style="left:6.82px;top:1022.10px;font-size:12px;line-height:12px;color:#fff;transform:scaleX(0.8587);">SEITE 11 VON 17</span><span class="t" style="left:108.27px;top:1022.10px;font-size:12px;line-height:12px;color:#fff;transform:scaleX(0.8775);">1083 WÖRTER</span><span class="t" style="left:199.92px;top:1022.10px;font-size:12px;line-height:12px;color:#fff;transform:scaleX(0.8295);">ENGLISCH (USA)</span><span class="t" style="left:1387.52px;top:1022.10px;font-size:12px;line-height:12px;color:#fff;transform:scaleX(0.9123);">60 %</span><span class="t" style="left:735.02px;top:152.84px;font-size:9.6px;line-height:9.6px;color:#3a3a3a;-webkit-text-stroke:0.25px #3a3a3a;">2</span><span class="t" style="left:826.12px;top:152.84px;font-size:9.6px;line-height:9.6px;color:#3a3a3a;-webkit-text-stroke:0.25px #3a3a3a;">2</span><span class="t" style="left:871.42px;top:152.84px;font-size:9.6px;line-height:9.6px;color:#3a3a3a;-webkit-text-stroke:0.25px #3a3a3a;">4</span><span class="t" style="left:917.42px;top:152.84px;font-size:9.6px;line-height:9.6px;color:#3a3a3a;-webkit-text-stroke:0.25px #3a3a3a;">6</span><span class="t" style="left:962.22px;top:152.84px;font-size:9.6px;line-height:9.6px;color:#3a3a3a;-webkit-text-stroke:0.25px #3a3a3a;">8</span>
</body></html>
